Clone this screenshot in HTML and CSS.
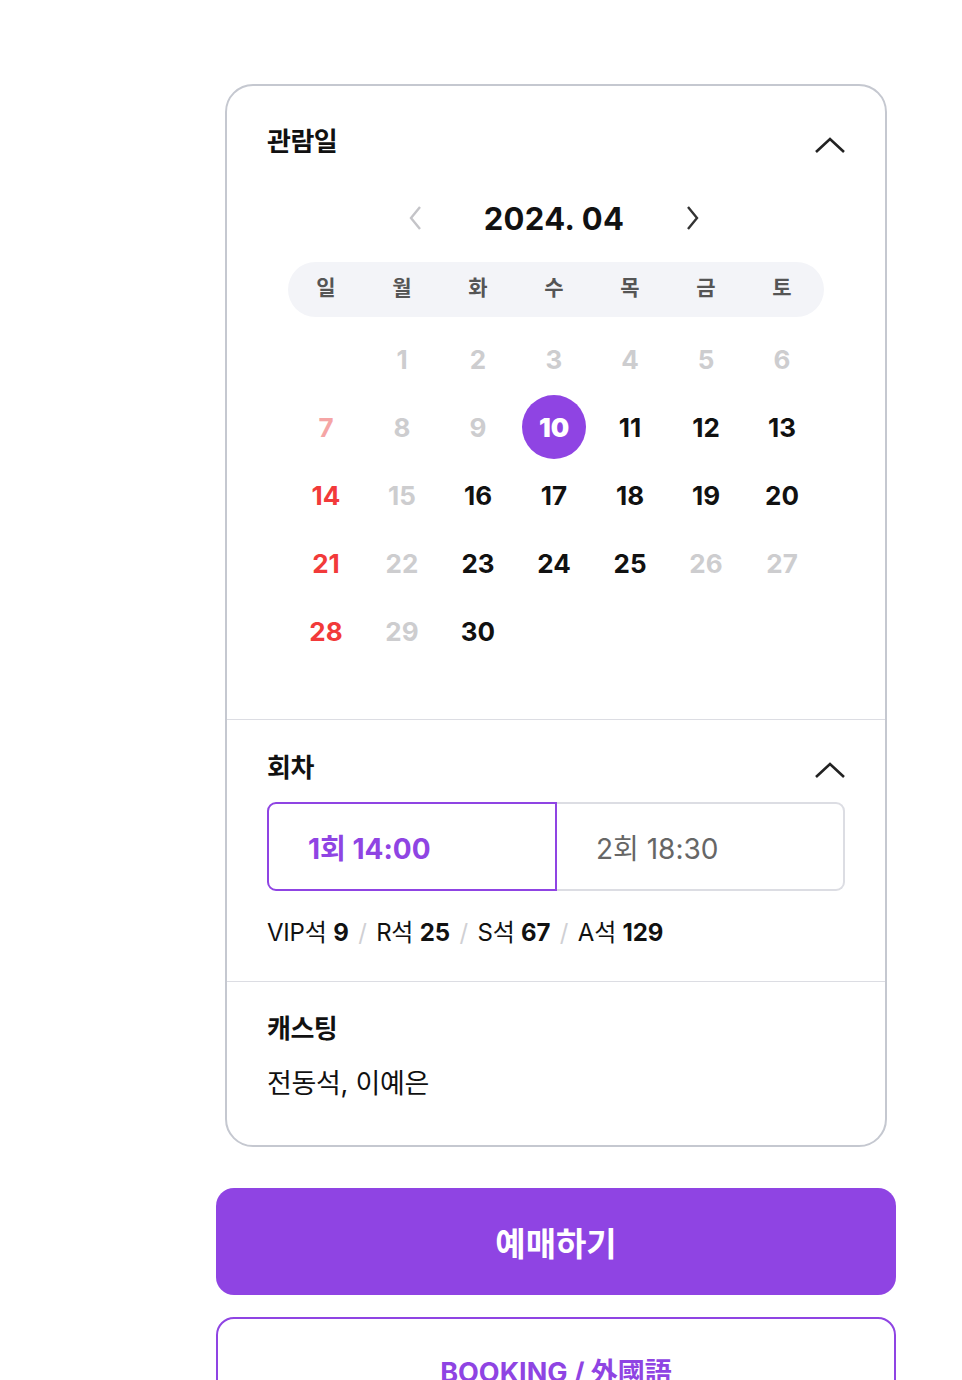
FILE: index.html
```html
<!DOCTYPE html>
<html lang="ko">
<head>
  <meta charset="utf-8">
  <title>예매</title>
  <link rel="stylesheet" href="styles.css">
</head>
<body>

  <div class="booking">
    <div class="panel">

      <section class="section calendar-section">
        <div class="section-head">
          <h2>관람일</h2>
          <svg class="toggle" width="32" height="18" viewBox="0 0 32 18"><path d="M2 16 L16 3 L30 16" fill="none" stroke="#222" stroke-width="2.6"/></svg>
        </div>

        <div class="month-nav">
          <svg class="arrow" width="14" height="26" viewBox="0 0 14 26"><path d="M12 2 L3 13 L12 24" fill="none" stroke="#c4c4c8" stroke-width="2.4"/></svg>
          <span class="month">2024. 04</span>
          <svg class="arrow" width="14" height="26" viewBox="0 0 14 26"><path d="M2 2 L11 13 L2 24" fill="none" stroke="#333" stroke-width="2.4"/></svg>
        </div>

        <div class="calendar">
          <div class="weekdays">
            <span>일</span><span>월</span><span>화</span><span>수</span><span>목</span><span>금</span><span>토</span>
          </div>
          <div class="days">
            <span></span>
            <span class="off">1</span><span class="off">2</span><span class="off">3</span><span class="off">4</span><span class="off">5</span><span class="off">6</span>
            <span class="sun-off">7</span><span class="off">8</span><span class="off">9</span><span class="selected"><b>10</b></span><span>11</span><span>12</span><span>13</span>
            <span class="sun">14</span><span class="off">15</span><span>16</span><span>17</span><span>18</span><span>19</span><span>20</span>
            <span class="sun">21</span><span class="off">22</span><span>23</span><span>24</span><span>25</span><span class="off">26</span><span class="off">27</span>
            <span class="sun">28</span><span class="off">29</span><span>30</span>
          </div>
        </div>
      </section>

      <section class="section round-section">
        <div class="section-head">
          <h2>회차</h2>
          <svg class="toggle" width="32" height="18" viewBox="0 0 32 18"><path d="M2 16 L16 3 L30 16" fill="none" stroke="#222" stroke-width="2.6"/></svg>
        </div>
        <div class="rounds">
          <button class="round active">1회 14:00</button>
          <button class="round">2회 18:30</button>
        </div>
        <p class="seats">
          VIP석 <b>9</b> <i>/</i> R석 <b>25</b> <i>/</i> S석 <b>67</b> <i>/</i> A석 <b>129</b>
        </p>
      </section>

      <section class="section cast-section">
        <h2>캐스팅</h2>
        <p class="cast">전동석, 이예은</p>
      </section>

    </div>

    <button class="btn-primary">예매하기</button>
    <button class="btn-outline">BOOKING / 外國語</button>
  </div>

</body>
</html>
```

FILE: styles.css
```css
body {
  margin: 0;
  background: #fff;
  color: #111;
  font-family: Inter, "Noto Sans CJK KR", sans-serif;
}

.booking {
  width: 680px;
  margin-left: 216px;
  padding-top: 84px;
}

.panel {
  margin: 0 9px;
  border: 2px solid #c5c8d0;
  border-radius: 28px;
}

.section {
  padding: 38px 40px 0;
}

.section + .section {
  border-top: 1px solid #dcdde3;
}

.section h2 {
  margin: 0;
  font-size: 26px;
  line-height: 36px;
  font-weight: 700;
  letter-spacing: -0.5px;
}

.section-head {
  display: flex;
  justify-content: space-between;
  align-items: center;
}

.toggle {
  margin-right: -1px;
  margin-top: 6px;
}

.round-section .toggle {
  margin-top: 4px;
}

/* calendar */
.calendar-section {
  padding-bottom: 54px;
}

.month-nav {
  display: flex;
  justify-content: center;
  align-items: center;
  gap: 62px;
  margin-top: 38px;
  margin-right: 4px;
  height: 40px;
}

.month {
  font-size: 31px;
  font-weight: 700;
  letter-spacing: 0.3px;
  color: #111;
}

.calendar {
  width: 536px;
  margin: 24px auto 0;
}

.weekdays {
  display: grid;
  grid-template-columns: repeat(7, 76px);
  height: 48px;
  padding-bottom: 7px;
  align-items: center;
  background: #f3f4f8;
  border-radius: 28px;
}

.weekdays span {
  text-align: center;
  font-size: 21px;
  font-weight: 700;
  color: #555;
}

.days {
  display: grid;
  grid-template-columns: repeat(7, 76px);
  grid-auto-rows: 68px;
  margin-top: 8px;
}

.days span {
  display: flex;
  justify-content: center;
  align-items: center;
  font-size: 26px;
  font-weight: 700;
  color: #111;
}

.days .off {
  color: #cdcdcf;
}

.days .sun {
  color: #f23a3a;
}

.days .sun-off {
  color: #f5a5a5;
}

.days .selected b {
  display: flex;
  justify-content: center;
  align-items: center;
  width: 64px;
  height: 64px;
  border-radius: 50%;
  background: #8f44e3;
  color: #fff;
}

/* rounds */
.round-section {
  padding-top: 30px;
  padding-bottom: 32px;
}

.rounds {
  display: flex;
  margin-top: 16px;
}

.round {
  flex: 1;
  height: 89px;
  padding: 0 0 0 39px;
  text-align: left;
  background: #fff;
  font-family: Inter, "Noto Sans CJK KR", sans-serif;
  font-size: 28px;
  color: #666;
  border: 2px solid #dcdde3;
  border-left: none;
  border-radius: 0 9px 9px 0;
  cursor: pointer;
}

.round.active {
  border: 2px solid #8f44e3;
  border-radius: 9px 0 0 9px;
  color: #8f44e3;
  font-weight: 700;
}

.seats {
  margin: 26px 0 0;
  font-size: 24px;
  line-height: 32px;
  letter-spacing: -0.2px;
}

.seats b {
  font-weight: 700;
}

.seats i {
  font-style: normal;
  color: #d0d0d4;
  margin: 0 3px;
}

/* casting */
.cast-section {
  padding-top: 29px;
  padding-bottom: 43px;
}

.cast {
  margin: 19px 0 0;
  font-size: 27px;
  line-height: 36px;
  letter-spacing: -0.3px;
}

/* buttons */
.btn-primary,
.btn-outline {
  display: block;
  width: 100%;
  height: 107px;
  border-radius: 18px;
  font-family: Inter, "Noto Sans CJK KR", sans-serif;
  font-weight: 700;
  cursor: pointer;
}

.btn-primary {
  margin-top: 41px;
  border: none;
  background: #8f44e3;
  color: #fff;
  font-size: 33px;
}

.btn-outline {
  margin-top: 22px;
  border: 2px solid #8f44e3;
  background: #fff;
  color: #8f44e3;
  font-size: 27px;
}
```
